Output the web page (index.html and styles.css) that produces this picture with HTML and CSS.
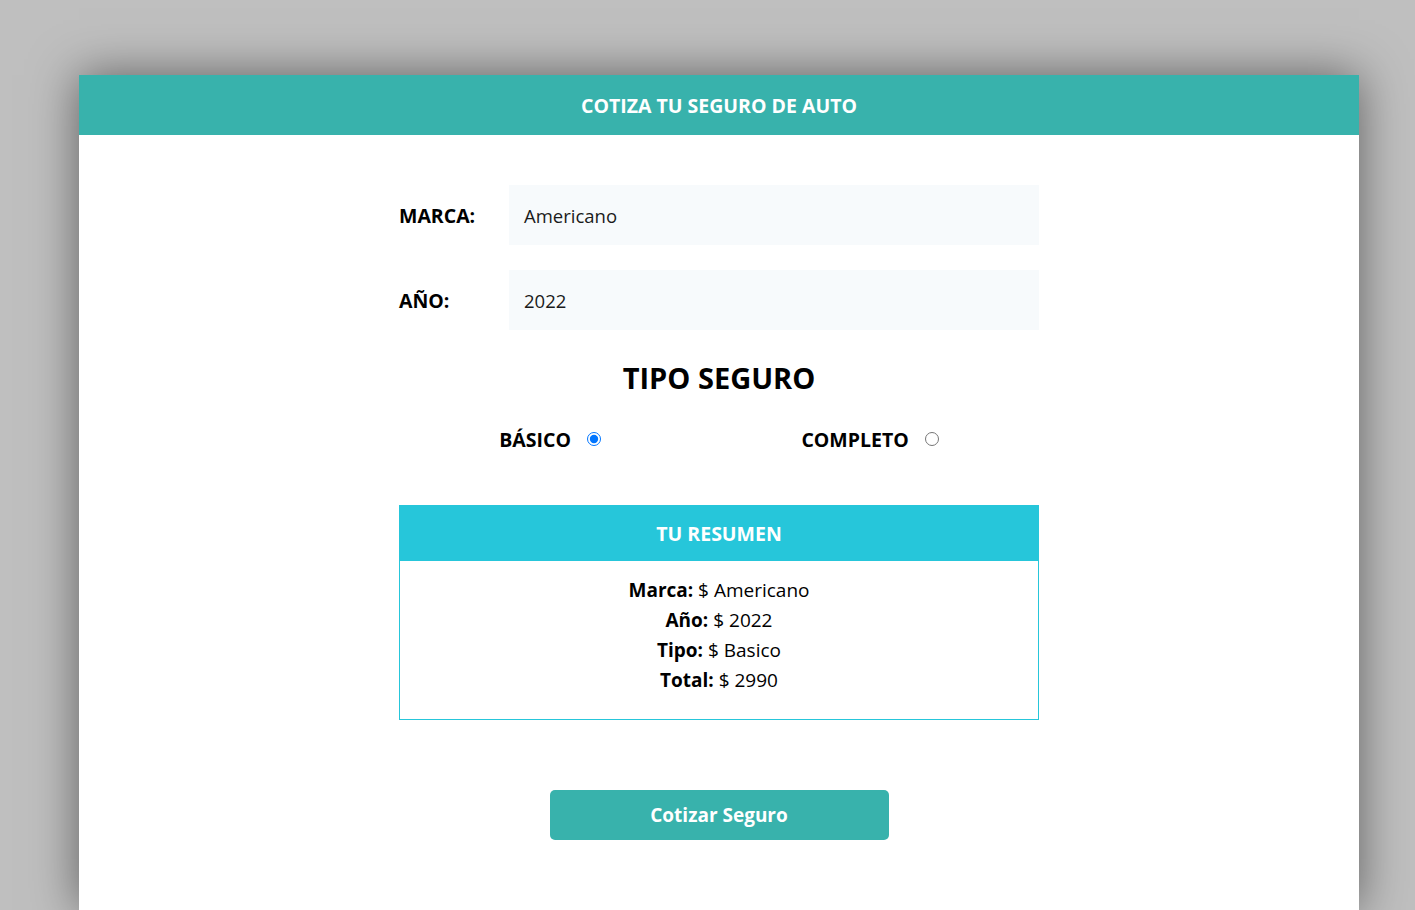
FILE: index.html
```html
<!DOCTYPE html>
<html lang="es">
<head>
<meta charset="utf-8">
<title>Cotizador</title>
<link rel="stylesheet" href="styles.css">
</head>
<body>
<div class="app">
  <header class="app-header">
    <h1>COTIZA TU SEGURO DE AUTO</h1>
  </header>
  <main class="app-body">
    <form class="form">
      <div class="field">
        <label class="field-label">MARCA:</label>
        <div class="field-input">Americano</div>
      </div>
      <div class="field">
        <label class="field-label">AÑO:</label>
        <div class="field-input">2022</div>
      </div>
      <h2 class="section-title">TIPO SEGURO</h2>
      <div class="radios">
        <label class="radio-item">BÁSICO <input type="radio" name="plan" checked></label>
        <label class="radio-item">COMPLETO <input type="radio" name="plan"></label>
      </div>
      <div class="summary">
        <div class="summary-header">TU RESUMEN</div>
        <ul class="summary-list">
          <li><strong>Marca:</strong> $ Americano</li>
          <li><strong>Año:</strong> $ 2022</li>
          <li><strong>Tipo:</strong> $ Basico</li>
          <li><strong>Total:</strong> $ 2990</li>
        </ul>
      </div>
      <div class="actions">
        <button type="button" class="btn">Cotizar Seguro</button>
      </div>
    </form>
  </main>
</div>
</body>
</html>
```

FILE: styles.css
```css
* { box-sizing: border-box; }
html, body { margin: 0; padding: 0; }
body {
  background: #bfbfbf;
  font-family: "Open Sans", "Noto Sans", sans-serif;
  color: #000;
  padding: 75px 56px 0 79px;
  height: 910px;
  overflow: hidden;
}
.app {
  width: 1280px;
  background: #fff;
  box-shadow: 0 0 45px rgba(0,0,0,0.5);
  height: 835px;
}
.app-header {
  background: #38b2ac;
  height: 60px;
  display: flex;
  align-items: center;
  justify-content: center;
}
.app-header h1 {
  margin: 0;
  color: #fff;
  font-size: 19.5px;
  font-weight: 700;
}
.app-body {
  padding-top: 50px;
  display: flex;
  justify-content: center;
}
.form {
  width: 640px;
  display: flex;
  flex-direction: column;
}
.field {
  display: flex;
  align-items: center;
  margin-bottom: 25px;
}
.field-label {
  width: 110px;
  font-weight: 700;
  font-size: 19.5px;
}
.field-input {
  flex: 1;
  height: 60px;
  background: #f7fafc;
  padding: 0 15px;
  display: flex;
  align-items: center;
  font-size: 18.5px;
  color: #1a1a1a;
}
.section-title {
  margin: 4px 0 0;
  text-align: center;
  font-size: 29px;
  font-weight: 700;
  line-height: 38px;
}
.radios {
  display: flex;
  justify-content: space-around;
  margin-top: 30px;
}
.radio-item {
  display: flex;
  align-items: center;
  font-weight: 700;
  font-size: 19.5px;
  line-height: 26px;
}
.radio-item input {
  margin: 0 0 2px 16px;
  width: 14px;
  height: 14px;
}
.summary {
  margin-top: 52px;
  border: 1px solid #26c6da;
}
.summary-header {
  background: #26c6da;
  color: #fff;
  height: 55px;
  display: flex;
  align-items: center;
  justify-content: center;
  font-weight: 700;
  font-size: 19.5px;
}
.summary-list {
  list-style: none;
  margin: 0;
  padding: 14px 0 24px;
  text-align: center;
  font-size: 19px;
  line-height: 30px;
}
.summary-list strong { font-weight: 700; }
.actions {
  display: flex;
  justify-content: center;
  margin-top: 70px;
}
.btn {
  width: 339px;
  height: 50px;
  border: none;
  border-radius: 5px;
  background: #38b2ac;
  color: #fff;
  font-family: inherit;
  font-size: 19px;
  font-weight: 700;
  cursor: pointer;
}
```
